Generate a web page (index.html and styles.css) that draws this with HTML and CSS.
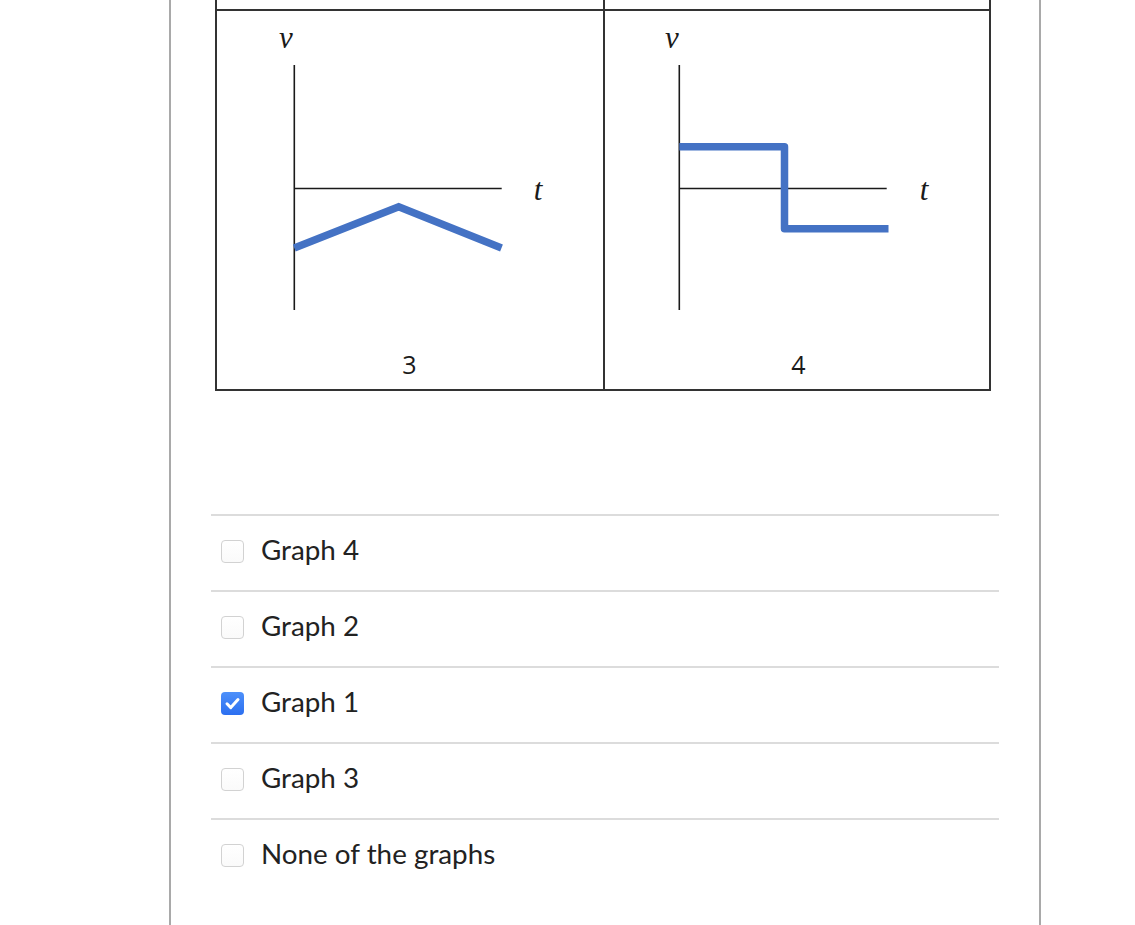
FILE: index.html
```html
<!DOCTYPE html>
<html>
<head>
<meta charset="utf-8">
<link rel="stylesheet" href="styles.css">
</head>
<body>
<div class="page">
  <div class="content">
    <div class="graph-table">
      <div class="top-row">
        <div class="cell"></div>
        <div class="cell"></div>
      </div>
      <div class="graph-row">
        <div class="cell">
          <svg class="graph" width="386" height="378" viewBox="0 0 386 378">
            <text class="var" x="69" y="37" text-anchor="middle">v</text>
            <line class="axis" x1="77.3" y1="54" x2="77.3" y2="299"/>
            <line class="axis" x1="77.3" y1="177.5" x2="284.7" y2="177.5"/>
            <text class="var" x="321" y="189" text-anchor="middle">t</text>
            <polyline class="curve" points="77.3,237 181.7,195.7 284.5,237"/>
            <text class="num" x="192.5" y="363" text-anchor="middle">3</text>
          </svg>
        </div>
        <div class="cell">
          <svg class="graph" width="384" height="378" viewBox="0 0 384 378">
            <text class="var" x="67" y="37" text-anchor="middle">v</text>
            <line class="axis" x1="74.3" y1="54" x2="74.3" y2="299"/>
            <line class="axis" x1="74.3" y1="177.5" x2="281.7" y2="177.5"/>
            <text class="var" x="319" y="189" text-anchor="middle">t</text>
            <polyline class="curve step" points="74.3,135.7 179.5,135.7 179.5,217.8 283.5,217.8"/>
            <text class="num" x="193.3" y="363" text-anchor="middle">4</text>
          </svg>
        </div>
      </div>
    </div>

    <ul class="answers">
      <li class="answer">
        <span class="box"></span>
        <span class="label">Graph 4</span>
      </li>
      <li class="answer">
        <span class="box"></span>
        <span class="label">Graph 2</span>
      </li>
      <li class="answer">
        <span class="box checked">
          <svg width="23" height="23" viewBox="0 0 23 23"><path d="M6 11.8 L9.8 15.6 L17 7.6" fill="none" stroke="#fff" stroke-width="3" stroke-linecap="round" stroke-linejoin="round"/></svg>
        </span>
        <span class="label">Graph 1</span>
      </li>
      <li class="answer">
        <span class="box"></span>
        <span class="label">Graph 3</span>
      </li>
      <li class="answer">
        <span class="box"></span>
        <span class="label">None of the graphs</span>
      </li>
    </ul>
  </div>
</div>
</body>
</html>
```

FILE: styles.css
```css
html, body {
  margin: 0;
  padding: 0;
  background: #ffffff;
}

body {
  font-family: Lato, "Open Sans", sans-serif;
  color: #222;
}

.page {
  margin-left: 169px;
  width: 868px;
  min-height: 925px;
  border-left: 2px solid #a9a9a9;
  border-right: 2px solid #a9a9a9;
}

.content {
  padding: 0 40px;
}

.graph-table {
  margin-left: 4px;
  width: 772px;
  border-left: 2px solid #333;
  border-right: 2px solid #333;
  border-bottom: 2px solid #333;
}

.top-row,
.graph-row {
  display: grid;
  grid-template-columns: 386px 384px;
  column-gap: 2px;
  background: #333;
}

.top-row {
  height: 9px;
}

.graph-row {
  border-top: 2px solid #333;
  height: 378px;
}

.cell {
  background: #fff;
}

.graph {
  display: block;
}

.graph .axis {
  stroke: #1a1a1a;
  stroke-width: 1.6;
}

.graph .curve {
  fill: none;
  stroke: #4472c4;
  stroke-width: 7.5;
  stroke-linejoin: miter;
}

.graph .step {
  stroke-linejoin: round;
}

.graph .var {
  font-family: "Liberation Serif", "DejaVu Serif", serif;
  font-style: italic;
  font-size: 31px;
  fill: #1a1a1a;
}

.graph .num {
  font-family: "Open Sans", "Liberation Sans", sans-serif;
  font-size: 25px;
  fill: #1a1a1a;
}

.answers {
  list-style: none;
  margin: 123px 0 0;
  padding: 0;
}

.answer {
  display: flex;
  align-items: flex-start;
  border-top: 2px solid #dcdcdc;
  padding: 18px 0 25px 10px;
  height: 31px;
}

.box {
  flex: none;
  width: 21px;
  height: 21px;
  margin-top: 6px;
  border: 1px solid #d2d2d2;
  border-radius: 4px;
  background: linear-gradient(#ffffff, #fafafa);
}

.box.checked {
  width: 23px;
  height: 23px;
  border: none;
  background: linear-gradient(#4d90fa, #2c6ff0);
}

.box.checked svg {
  display: block;
}

.label {
  margin-left: 17px;
  font-size: 27.8px;
  line-height: 31px;
  color: #222;
}
```
